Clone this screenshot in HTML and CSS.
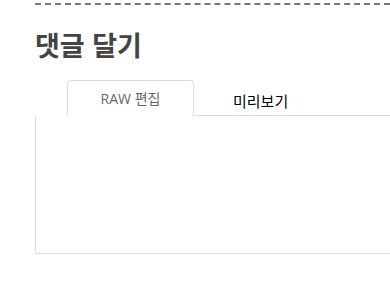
FILE: index.html
```html
<!DOCTYPE html>
<html lang="ko">
<head>
<meta charset="utf-8">
<link rel="stylesheet" href="styles.css">
</head>
<body>
<div class="page">
  <div class="divider"></div>
  <h3 class="title">댓글 달기</h3>
  <div class="editor">
    <ul class="tabs">
      <li class="tab active">RAW 편집</li>
      <li class="tab">미리보기</li>
    </ul>
    <div class="pane"></div>
  </div>
</div>
</body>
</html>
```

FILE: styles.css
```css
html, body {
  margin: 0;
  padding: 0;
  background: #fff;
}
body {
  font-family: "Open Sans", "Noto Sans CJK KR", sans-serif;
}
.page {
  padding: 3px 0 0 35px;
}
.divider {
  border-top: 2px dashed #777;
  height: 0;
}
.title {
  margin: 0;
  padding-top: 22px;
  height: 53px;
  font-family: "Noto Sans CJK KR", sans-serif;
  font-size: 27px;
  font-weight: 700;
  line-height: 36px;
  color: #444;
}
.tabs {
  list-style: none;
  margin: 0 0 0 32px;
  padding: 0;
  display: flex;
  border-bottom: 1px solid #ddd;
  height: 35px;
}
.tab {
  box-sizing: border-box;
  height: 36px;
  font-size: 14px;
}
.tab.active {
  width: 127px;
  border: 1px solid #ddd;
  border-bottom-color: #fff;
  border-radius: 4px 4px 0 0;
  background: #fff;
  color: #666;
  text-align: center;
  padding-top: 9px;
  line-height: 18px;
  font-family: "Open Sans", "Noto Sans CJK KR", sans-serif;
}
.tab:not(.active) {
  padding: 11px 0 0 39px;
  line-height: 20px;
  font-size: 15px;
  color: #000;
  font-family: "Noto Sans CJK KR", sans-serif;
}
.pane {
  height: 137px;
  border-left: 1px solid #ddd;
  border-bottom: 1px solid #ddd;
}
```
